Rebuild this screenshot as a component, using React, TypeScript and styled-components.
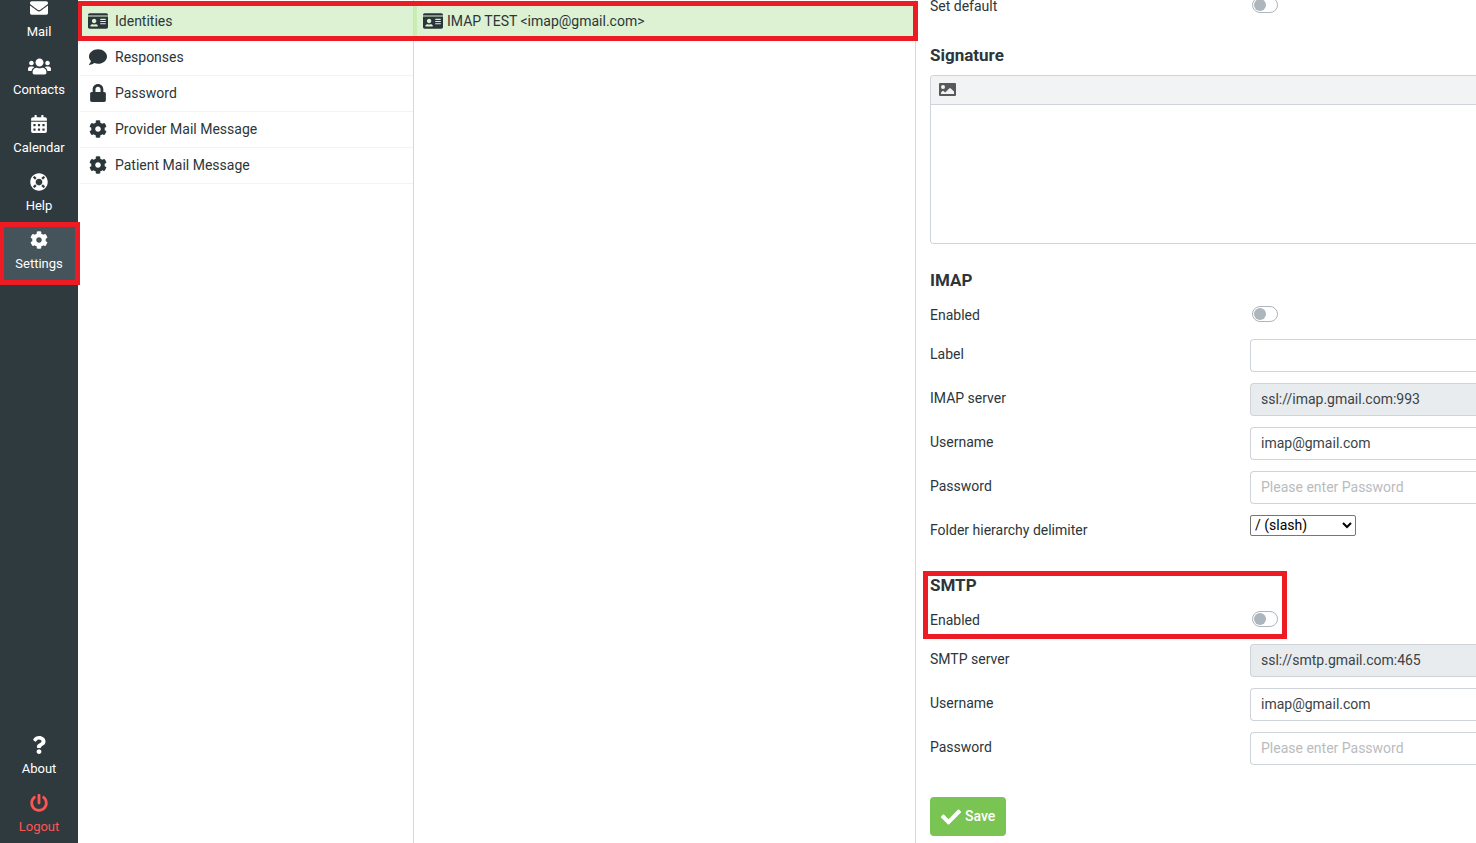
import React from "react";
import styled, { createGlobalStyle, css } from "styled-components";
import type { IconType } from "react-icons";
import {
  FaCalendarAlt,
  FaCheck,
  FaCog,
  FaComment,
  FaEnvelope,
  FaIdCard,
  FaLifeRing,
  FaLock,
  FaPowerOff,
  FaQuestion,
  FaUsers,
} from "react-icons/fa";

const color = {
  text: "#2c363a",
  sidebar: "#2f3a3f",
  sidebarActive: "#45545b",
  line: "#ced4da",
  pane: "#d1dade",
  rowLine: "#f1f3f4",
  selected: "#dcf2d2",
  selectedEdge: "#c8eeb4",
  muted: "#adb5bd",
  disabled: "#e9ecef",
  save: "#7ac454",
  logout: "#ff5552",
  mark: "#ed1c24",
};

const GlobalStyle = createGlobalStyle`
  *, *::before, *::after { box-sizing: border-box; }
  body {
    margin: 0;
    overflow: hidden;
    background: #fff;
    color: ${color.text};
    font: 14px/21px Roboto, "Liberation Sans", sans-serif;
  }
`;

const Page = styled.div`
  display: flex;
  height: 100vh;
`;

const Highlight = styled.div`
  position: absolute;
  z-index: 2;
  border: solid ${color.mark};
  border-width: 5px 5px 5px 4px;
  pointer-events: none;
`;

/* Sidebar */

const Sidebar = styled.nav`
  flex: 0 0 78px;
  display: flex;
  flex-direction: column;
  justify-content: space-between;
  background: ${color.sidebar};
`;

const NavGroup = styled.div<{ $scrolled?: boolean }>`
  display: flex;
  flex-direction: column;
  margin-top: ${(p) => (p.$scrolled ? "-8px" : 0)};
  margin-bottom: ${(p) => (p.$scrolled ? 0 : "-2px")};
`;

const NavItem = styled.a<{ $active?: boolean; $danger?: boolean }>`
  position: relative;
  display: flex;
  flex-direction: column;
  align-items: center;
  gap: 6px;
  height: 58px;
  padding-top: 7px;
  background: ${(p) => (p.$active ? color.sidebarActive : "transparent")};
  color: ${(p) => (p.$danger ? color.logout : "#fff")};
  font-size: 13px;
  line-height: 18px;
  text-decoration: none;
`;

const SettingsHighlight = styled(Highlight)`
  inset: -2px -2px -3px 0;
`;

/* Lists */

const Lists = styled.div`
  position: relative;
  flex: none;
  display: flex;
`;

const ListHighlight = styled(Highlight)`
  top: 1px;
  left: 0;
  right: -2px;
  height: 40px;
`;

const List = styled.ul<{ $width: number }>`
  width: ${(p) => p.$width}px;
  margin: 0;
  padding: 4px 0 0;
  border-right: 1px solid ${color.pane};
  list-style: none;
`;

const ListLink = styled.a<{ $selected?: boolean; $tight?: boolean }>`
  display: flex;
  align-items: center;
  gap: ${(p) => (p.$tight ? 4 : 7)}px;
  height: 36px;
  padding: 0 6px;
  padding-left: ${(p) => (p.$tight ? 6 : 7)}px;
  border-left: 3px solid transparent;
  border-bottom: 1px solid ${color.rowLine};
  color: inherit;
  text-decoration: none;
  ${(p) =>
    p.$selected &&
    css`
      background: ${color.selected};
      border-left-color: ${color.selectedEdge};
    `}
`;

const IconSlot = styled.span`
  flex: 0 0 20px;
  display: flex;
  justify-content: center;
  padding-bottom: 1px;
`;

/* Form */

const Form = styled.form`
  flex: 1;
  min-width: 0;
  margin-top: -9px;
  padding-left: 14px;
  display: flex;
  flex-direction: column;
  align-items: stretch;
  gap: 24px;
`;

const Section = styled.section`
  position: relative;
`;

const Heading = styled.h2`
  margin: 0 0 8px;
  font-size: 17px;
  font-weight: 700;
  line-height: 24px;
`;

const Rows = styled.div`
  display: flex;
  flex-direction: column;
  gap: 11px;
`;

const Row = styled.div`
  display: grid;
  grid-template-columns: 320px minmax(0, 1fr);
  align-items: start;
`;

const Label = styled.label`
  padding-top: 5px;
`;

const Input = styled.input`
  width: 100%;
  height: 33px;
  padding: 0 10px 2px;
  border: 1px solid ${color.line};
  border-right: 0;
  border-radius: 4px 0 0 4px;
  background: #fff;
  color: #3b4346;
  font: inherit;

  &:disabled {
    background: ${color.disabled};
  }
  &::placeholder {
    color: #b9bcbe;
    opacity: 1;
  }
`;

const ToggleCell = styled.div`
  display: flex;
  align-items: center;
  height: 28px;
  padding-left: 2px;
`;

const Toggle = styled.input`
  appearance: none;
  width: 26px;
  height: 16px;
  margin: 0;
  padding: 1px;
  border: 1px solid ${color.muted};
  border-radius: 8px;
  background: #fff;

  &::before {
    content: "";
    display: block;
    width: 12px;
    height: 12px;
    border-radius: 50%;
    background: ${color.muted};
  }
  &:checked::before {
    margin-left: auto;
  }
`;

const SelectCell = styled.div`
  height: 34px;
`;

const Select = styled.select`
  display: block;
  width: 106px;
  height: 21px;
  padding: 0 0 1px;
  border: 1px solid #767676;
  border-radius: 2px;
  background: #fff;
  color: #000;
  font: inherit;
`;

const Editor = styled.div`
  display: flex;
  flex-direction: column;
  height: 169px;
  border: 1px solid ${color.line};
  border-right: 0;
  border-radius: 4px 0 0 4px;
  overflow: hidden;
`;

const Toolbar = styled.div`
  flex: 0 0 29px;
  display: flex;
  align-items: center;
  padding-left: 8px;
  padding-bottom: 1px;
  background: #f1f3f4;
  border-bottom: 1px solid ${color.line};
`;

const ToolButton = styled.button`
  display: flex;
  padding: 0;
  border: 0;
  background: none;
`;

const EditorText = styled.textarea`
  flex: 1;
  padding: 8px;
  border: 0;
  outline: 0;
  resize: none;
  font: inherit;
`;

const SmtpHighlight = styled(Highlight)`
  top: -2px;
  left: -7px;
  width: 364px;
  height: 68px;
  border-left-width: 5px;
`;

const SaveButton = styled.button`
  display: flex;
  align-items: center;
  gap: 4px;
  height: 39px;
  margin-top: 8px;
  padding: 0 11px;
  align-self: flex-start;
  border: 0;
  border-radius: 4px;
  background: ${color.save};
  color: #fff;
  font: inherit;
  font-weight: 500;
`;

const PictureIcon = () => (
  <svg width="17" height="13" viewBox="0 0 17 13" aria-hidden="true">
    <rect width="17" height="13" rx="1" fill="#595959" />
    <circle cx="4" cy="4" r="2" fill="#f1f3f4" />
    <path d="M2 11V9.500l1.500-1.500q.5-.4 1 0l1.700 1.400 4-4q.8-.8 1.600 0L15 8.500V11z" fill="#f1f3f4" />
  </svg>
);

type NavEntry = { name: string; icon: IconType; size: number; active?: boolean; danger?: boolean };

const mainNav: NavEntry[] = [
  { name: "Mail", icon: FaEnvelope, size: 18 },
  { name: "Contacts", icon: FaUsers, size: 23 },
  { name: "Calendar", icon: FaCalendarAlt, size: 18 },
  { name: "Help", icon: FaLifeRing, size: 18 },
  { name: "Settings", icon: FaCog, size: 18, active: true },
];

const footNav: NavEntry[] = [
  { name: "About", icon: FaQuestion, size: 18 },
  { name: "Logout", icon: FaPowerOff, size: 18, danger: true },
];

const NavIcon = styled.span`
  display: flex;
  align-items: center;
  height: 18px;
`;

const renderNav = ({ name, icon: Icon, size, active, danger }: NavEntry) => (
  <NavItem key={name} href="#" $active={active} $danger={danger}>
    <NavIcon>
      <Icon size={size} />
    </NavIcon>
    {name}
    {active && <SettingsHighlight />}
  </NavItem>
);

const settings: { name: string; icon: IconType; size: number; selected?: boolean }[] = [
  { name: "Identities", icon: FaIdCard, size: 20, selected: true },
  { name: "Responses", icon: FaComment, size: 18 },
  { name: "Password", icon: FaLock, size: 18 },
  { name: "Provider Mail Message", icon: FaCog, size: 18 },
  { name: "Patient Mail Message", icon: FaCog, size: 18 },
];

type FieldProps = {
  id: string;
  label: string;
  type?: string;
  value?: string;
  placeholder?: string;
  disabled?: boolean;
};

const Field = ({ id, label, type = "text", value, ...rest }: FieldProps) => (
  <Row>
    <Label htmlFor={id}>{label}</Label>
    <Input id={id} type={type} defaultValue={value} {...rest} />
  </Row>
);

const ToggleField = ({ id, label }: { id: string; label: string }) => (
  <Row>
    <Label htmlFor={id}>{label}</Label>
    <ToggleCell>
      <Toggle id={id} type="checkbox" />
    </ToggleCell>
  </Row>
);

export default function App() {
  return (
    <Page>
      <GlobalStyle />
      <Sidebar>
        <NavGroup $scrolled>{mainNav.map(renderNav)}</NavGroup>
        <NavGroup>{footNav.map(renderNav)}</NavGroup>
      </Sidebar>

      <Lists>
        <List $width={336}>
          {settings.map(({ name, icon: Icon, size, selected }) => (
            <li key={name}>
              <ListLink href="#" $selected={selected}>
                <IconSlot>
                  <Icon size={size} />
                </IconSlot>
                {name}
              </ListLink>
            </li>
          ))}
        </List>
        <List $width={502}>
          <li>
            <ListLink href="#" $selected $tight>
              <IconSlot>
                <FaIdCard size={20} />
              </IconSlot>
              IMAP TEST &lt;imap@gmail.com&gt;
            </ListLink>
          </li>
        </List>
        <ListHighlight />
      </Lists>

      <Form onSubmit={(e) => e.preventDefault()}>
        <ToggleField id="default" label="Set default" />

        <Section>
          <Heading>Signature</Heading>
          <Editor>
            <Toolbar>
              <ToolButton type="button" aria-label="Insert image">
                <PictureIcon />
              </ToolButton>
            </Toolbar>
            <EditorText aria-label="Signature" />
          </Editor>
        </Section>

        <Section>
          <Heading>IMAP</Heading>
          <Rows>
            <ToggleField id="imap-enabled" label="Enabled" />
            <Field id="imap-label" label="Label" />
            <Field id="imap-server" label="IMAP server" value="ssl://imap.gmail.com:993" disabled />
            <Field id="imap-user" label="Username" value="imap@gmail.com" />
            <Field id="imap-pass" label="Password" type="password" placeholder="Please enter Password" />
            <Row>
              <Label htmlFor="delimiter">Folder hierarchy delimiter</Label>
              <SelectCell>
                <Select id="delimiter" defaultValue="/">
                  <option value="/">/ (slash)</option>
                  <option value=".">. (dot)</option>
                </Select>
              </SelectCell>
            </Row>
          </Rows>
        </Section>

        <Section>
          <Heading>SMTP</Heading>
          <Rows>
            <ToggleField id="smtp-enabled" label="Enabled" />
            <Field id="smtp-server" label="SMTP server" value="ssl://smtp.gmail.com:465" disabled />
            <Field id="smtp-user" label="Username" value="imap@gmail.com" />
            <Field id="smtp-pass" label="Password" type="password" placeholder="Please enter Password" />
          </Rows>
          <SmtpHighlight />
        </Section>

        <SaveButton type="submit">
          <FaCheck size={20} />
          Save
        </SaveButton>
      </Form>
    </Page>
  );
}
